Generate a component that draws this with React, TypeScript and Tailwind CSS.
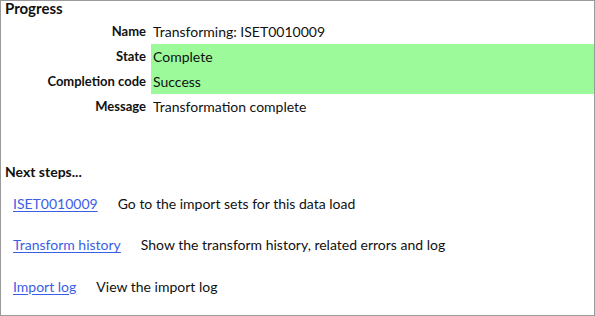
import React from 'react';

const rows = [
  { label: 'Name', value: 'Transforming: ISET0010009', ok: false },
  { label: 'State', value: 'Complete', ok: true },
  { label: 'Completion code', value: 'Success', ok: true },
  { label: 'Message', value: 'Transformation complete', ok: false },
];

const steps = [
  { link: 'ISET0010009', text: 'Go to the import sets for this data load' },
  { link: 'Transform history', text: 'Show the transform history, related errors and log' },
  { link: 'Import log', text: 'View the import log' },
];

export default function App() {
  return (
    <div
      className="w-[595px] h-[316px] border border-[#9a9a9a] bg-white text-[#111] text-[14px] overflow-hidden"
      style={{ fontFamily: 'Lato, "Noto Sans", sans-serif' }}
    >
      <h2 className="font-bold text-[15px] px-[4px] leading-[15px] h-[18px]">Progress</h2>

      <table className="w-full border-collapse">
        <tbody>
          {rows.map((r) => (
            <tr key={r.label} className="h-[25px]">
              <td className="w-[150px] text-right font-bold text-[13px] pr-[5px] whitespace-nowrap">{r.label}</td>
              <td className={`pl-[2px] ${r.ok ? 'bg-[#9cfa9b]' : ''}`}>{r.value}</td>
            </tr>
          ))}
        </tbody>
      </table>

      {/* Next steps */}
      <h3 className="font-bold px-[4px] mt-[42px]">Next steps...</h3>
      <div className="pl-[12px] mt-[11px] flex flex-col gap-[21.5px]">
        {steps.map((s) => (
          <div key={s.link} className="flex items-center gap-[20px] h-[20px]">
            <a href="#" className="text-[#3b5ee6] underline underline-offset-2">
              {s.link}
            </a>
            <span>{s.text}</span>
          </div>
        ))}
      </div>
    </div>
  );
}
